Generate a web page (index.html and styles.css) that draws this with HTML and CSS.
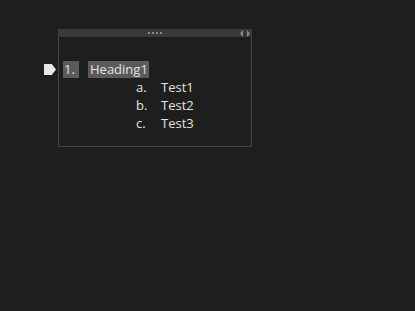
FILE: index.html
```html
<!DOCTYPE html>
<html lang="en">
<head>
    <meta charset="UTF-8">
    <title>List editor</title>
    <link rel="stylesheet" href="styles.css">
</head>
<body>
    <div class="stage">
        <div class="frame">
            <div class="frame-bar">
                <div class="grip">
                    <span></span><span></span><span></span><span></span>
                </div>
                <div class="arrows">
                    <svg width="10" height="7" viewBox="0 0 10 7">
                        <path d="M3 0 L0 3.5 L3 7 Z" fill="#8a8a8a"/>
                        <path d="M7 0 L10 3.5 L7 7 Z" fill="#8a8a8a"/>
                        <rect x="4.5" y="0" width="1" height="7" fill="#2a2a2a"/>
                    </svg>
                </div>
            </div>
            <div class="frame-body">
                <div class="item">
                    <span class="marker"></span>
                    <span class="num hl">1.</span>
                    <span class="label hl">Heading1</span>
                </div>
                <ol class="sub">
                    <li><span class="letter">a.</span>Test1</li>
                    <li><span class="letter">b.</span>Test2</li>
                    <li><span class="letter">c.</span>Test3</li>
                </ol>
            </div>
        </div>
    </div>
</body>
</html>
```

FILE: styles.css
```css
* {
    margin: 0;
    padding: 0;
    box-sizing: border-box;
}

body {
    background: #1e1e1e;
    font-family: "Open Sans", "Noto Sans", sans-serif;
    color: #e2e2e2;
    width: 415px;
    height: 311px;
    overflow: hidden;
}

.stage {
    padding: 29px 0 0 58px;
}

.frame {
    position: relative;
    width: 194px;
    height: 118px;
    border: 1px solid #454545;
    border-top: none;
}

.frame-bar {
    height: 8px;
    background: #3a3a3a;
    margin: 0 -1px;
    display: flex;
    align-items: center;
    justify-content: center;
    position: relative;
}

.grip {
    display: flex;
    gap: 2px;
}

.grip span {
    width: 2px;
    height: 2px;
    background: #8a8a8a;
}

.arrows {
    position: absolute;
    right: 2px;
    top: 1px;
    line-height: 0;
}

.frame-body {
    padding-top: 24px;
}

.item {
    position: relative;
    display: flex;
    align-items: center;
    height: 17px;
    font-size: 13px;
}

.marker {
    position: absolute;
    left: -15px;
    top: 3px;
    width: 12px;
    height: 11px;
    background: #e6e6e6;
    clip-path: polygon(0 0, 65% 0, 100% 50%, 65% 100%, 0 100%);
}

.hl {
    background: #5b5b5b;
    height: 17px;
    line-height: 17px;
}

.num {
    margin-left: 4px;
    width: 16px;
    padding-left: 1px;
}

.label {
    margin-left: 9px;
    padding: 0 1px 0 2px;
}

.sub {
    list-style: none;
    padding-left: 77px;
    font-size: 13px;
    line-height: 18px;
}

.sub li {
    display: flex;
}

.letter {
    width: 25px;
}
```
